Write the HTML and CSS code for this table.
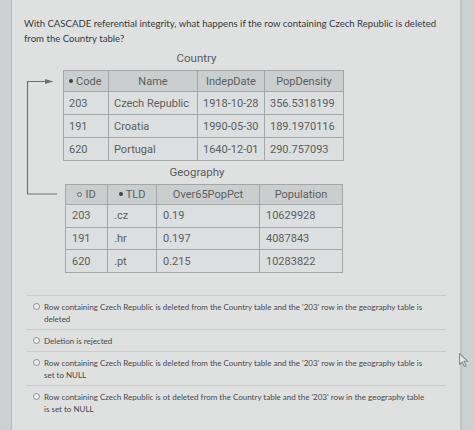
FILE: index.html
```html
<!DOCTYPE html>
<html>
<head>
<meta charset="utf-8">
<link rel="stylesheet" href="styles.css">
</head>
<body>
<div class="card">
  <svg class="connector" width="60" height="210" viewBox="0 0 60 210">
    <polyline points="36,81.5 16.5,81.5 16.5,194 46,194" fill="none" stroke="#6e7272" stroke-width="1.2"/>
    <polygon points="34,79 42.5,81.5 34,84" fill="#6e7272"/>
  </svg>
  <p class="question">With CASCADE referential integrity, what happens if the row containing Czech Republic is deleted from the Country table?</p>
  <div class="diagram">
    <div class="figure country-fig">
      <div class="caption">Country</div>
      <table class="tbl country">
        <colgroup><col class="c1"><col class="c2"><col class="c3"><col class="c4"></colgroup>
        <thead>
          <tr><th class="left"><span class="dot"></span>Code</th><th>Name</th><th>IndepDate</th><th>PopDensity</th></tr>
        </thead>
        <tbody>
          <tr><td>203</td><td>Czech Republic</td><td>1918-10-28</td><td>356.5318199</td></tr>
          <tr><td>191</td><td>Croatia</td><td>1990-05-30</td><td>189.1970116</td></tr>
          <tr><td>620</td><td>Portugal</td><td>1640-12-01</td><td>290.757093</td></tr>
        </tbody>
      </table>
    </div>
    <div class="figure geo-fig">
      <div class="caption">Geography</div>
      <table class="tbl geo">
        <colgroup><col class="g1"><col class="g2"><col class="g3"><col class="g4"></colgroup>
        <thead>
          <tr><th><span class="ring"></span>ID</th><th><span class="dot"></span>TLD</th><th>Over65PopPct</th><th>Population</th></tr>
        </thead>
        <tbody>
          <tr><td>203</td><td>.cz</td><td>0.19</td><td>10629928</td></tr>
          <tr><td>191</td><td>.hr</td><td>0.197</td><td>4087843</td></tr>
          <tr><td>620</td><td>.pt</td><td>0.215</td><td>10283822</td></tr>
        </tbody>
      </table>
    </div>
  </div>
  <ul class="options">
    <li><span class="radio"></span><span class="opt-text">Row containing Czech Republic is deleted from the Country table and the '203' row in the geography table is<br>deleted</span></li>
    <li><span class="radio"></span><span class="opt-text">Deletion is rejected</span></li>
    <li><span class="radio"></span><span class="opt-text">Row containing Czech Republic is deleted from the Country table and the '203' row in the geography table is<br>set to NULL</span></li>
    <li><span class="radio"></span><span class="opt-text">Row containing Czech Republic is ot deleted from the Country table and the '203' row in the geography table<br>is set to NULL</span></li>
  </ul>
</div>
<svg class="cursor" width="12" height="16" viewBox="0 0 12 16">
  <path d="M1.5 1.5 L1.5 12.5 L4.2 10 L6.3 14.5 L8 13.7 L6 9.3 L9.8 9.3 Z" fill="#e4e6e6" stroke="#8c9090" stroke-width="1.1" stroke-linejoin="round"/>
</svg>
</body>
</html>
```
FILE: styles.css
```css
html, body {
  margin: 0;
  padding: 0;
}
body {
  background: #cdd0d0;
  height: 430px;
  overflow: hidden;
  position: relative;
}
.card {
  position: relative;
  margin-left: 11px;
  width: 451px;
  box-sizing: border-box;
  height: 430px;
  background: #dfe1e1;
  border-left: 1px solid #b9bcbc;
  border-right: 2px solid #c2c5c5;
}
.connector {
  position: absolute;
  left: -1px;
  top: 0;
}
.question {
  margin: 0;
  padding: 16px 8px 0 12px;
  font-family: Lato, "Liberation Sans", sans-serif;
  font-size: 9.6px;
  line-height: 15px;
  color: #363a3a;
}
.diagram {
  margin-top: 5px;
}
.figure {
  display: flex;
  flex-direction: column;
}
.country-fig {
  margin-left: 51px;
  width: 280px;
}
.geo-fig {
  margin-left: 53px;
  width: 277px;
  margin-top: 4px;
}
.caption {
  font-family: Roboto, "Liberation Sans", sans-serif;
  font-size: 11.5px;
  line-height: 14px;
  color: #585c5c;
  text-align: center;
  padding-right: 13px;
}
.tbl {
  margin-top: 5px;
  width: 100%;
  table-layout: fixed;
  border-collapse: collapse;
  font-family: Roboto, "Liberation Sans", sans-serif;
  font-size: 11px;
  color: #5a5e5e;
  background: #dcdfdf;
  border: 1px solid #a3a7a7;
}
.tbl th, .tbl td {
  border: 1px solid #a3a7a7;
  padding: 0 0 0 5px;
  white-space: nowrap;
  overflow: hidden;
}
.tbl th {
  background: #cbcece;
  font-weight: normal;
  text-align: center;
  padding: 0;
}
.tbl th.left {
  text-align: left;
  padding-left: 5px;
}
.tbl td {
  text-align: left;
}
.dot {
  display: inline-block;
  width: 4px;
  height: 4px;
  border-radius: 50%;
  background: #3e4242;
  margin-right: 3px;
  vertical-align: 2px;
}
.ring {
  display: inline-block;
  width: 5px;
  height: 5px;
  box-sizing: border-box;
  border: 1px solid #6a6e6e;
  border-radius: 50%;
  margin-right: 3px;
  vertical-align: 1.5px;
}
.country th { height: 20px; }
.country td { height: 22px; }
.geo th { height: 19px; }
.geo td { height: 21.7px; padding-left: 6px; }
.c1 { width: 45px; }
.c2 { width: 89px; }
.c3 { width: 67px; }
.c4 { width: 79px; }
.g1 { width: 42px; }
.g2 { width: 49px; }
.g3 { width: 103px; }
.g4 { width: 83px; }
.options {
  list-style: none;
  margin: 22px 14px 0 15px;
  padding: 0;
}
.options li {
  display: flex;
  align-items: flex-start;
  border-top: 1px solid #c9cccc;
  padding: 4.5px 0 4.5px 6px;
}
.radio {
  flex: none;
  width: 7px;
  height: 7px;
  box-sizing: border-box;
  border: 1px solid #8e9292;
  border-radius: 50%;
  background: #eceeee;
  margin-top: 2.5px;
  margin-right: 4px;
}
.opt-text {
  font-family: Lato, "Liberation Sans", sans-serif;
  font-size: 8px;
  line-height: 12px;
  color: #454949;
  white-space: nowrap;
}
.cursor {
  position: absolute;
  left: 458px;
  top: 352px;
}
```
